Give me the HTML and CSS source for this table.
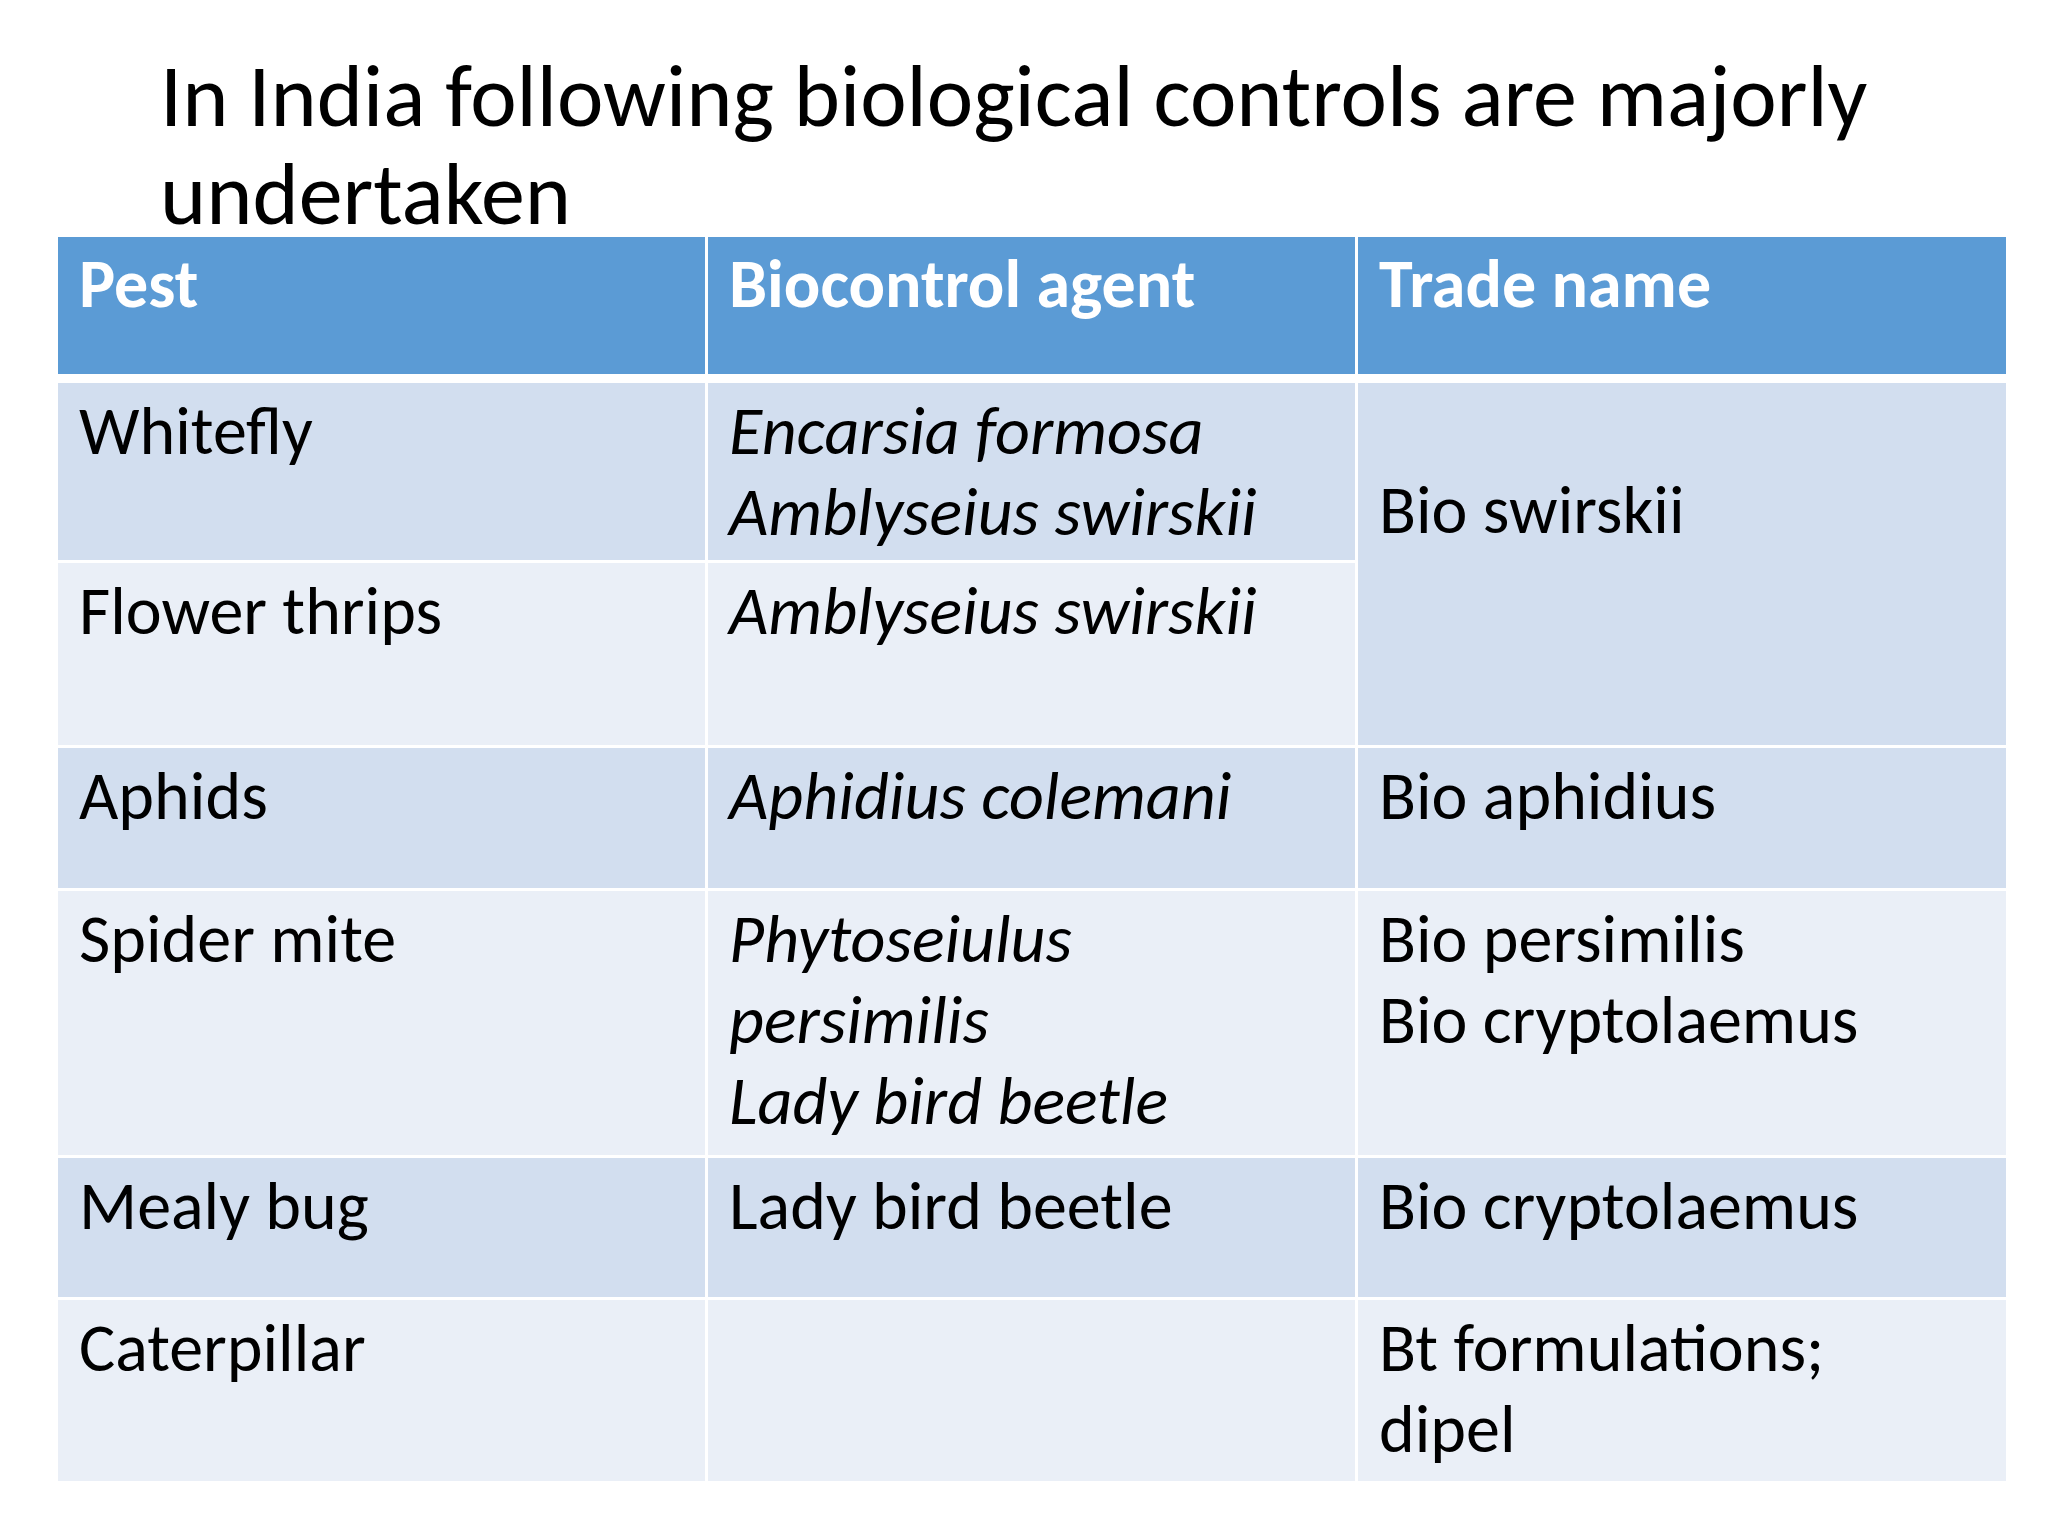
FILE: index.html
```html
<!DOCTYPE html>
<html lang="en">
<head>
<meta charset="utf-8">
<title>Biological controls in India</title>
<link rel="stylesheet" href="styles.css">
</head>
<body>
<main class="slide">
  <h1 class="title"><span class="title-line">In India following biological controls are majorly</span><span class="title-line">undertaken</span></h1>
  <div class="bio-table">
    <div class="cell head">Pest</div>
    <div class="cell head">Biocontrol agent</div>
    <div class="cell head">Trade name</div>

    <div class="cell band1">Whitefly</div>
    <div class="cell band1 sci">Encarsia formosa<br>Amblyseius swirskii</div>
    <div class="cell band1 merged">Bio swirskii</div>

    <div class="cell band2">Flower thrips</div>
    <div class="cell band2 sci">Amblyseius swirskii</div>

    <div class="cell band1">Aphids</div>
    <div class="cell band1 sci">Aphidius colemani</div>
    <div class="cell band1">Bio aphidius</div>

    <div class="cell band2">Spider mite</div>
    <div class="cell band2 sci">Phytoseiulus<br>persimilis<br>Lady bird beetle</div>
    <div class="cell band2">Bio persimilis<br>Bio cryptolaemus</div>

    <div class="cell band1">Mealy bug</div>
    <div class="cell band1">Lady bird beetle</div>
    <div class="cell band1">Bio cryptolaemus</div>

    <div class="cell band2">Caterpillar</div>
    <div class="cell band2"></div>
    <div class="cell band2">Bt formulations;<br>dipel</div>
  </div>
</main>
</body>
</html>
```
FILE: styles.css
```css
html, body {
  margin: 0;
  padding: 0;
  background: #ffffff;
}

.slide {
  width: 2048px;
  height: 1536px;
  overflow: hidden;
  font-family: Carlito, Lato, "Liberation Sans", sans-serif;
  color: #000000;
}

.title {
  box-sizing: border-box;
  height: 237px;
  margin: 0;
  padding: 47px 0 0 160px;
  font-size: 88px;
  font-weight: normal;
  line-height: 98px;
  white-space: nowrap;
}

.title-line {
  display: block;
  height: 98px;
}

.bio-table {
  display: grid;
  width: 1948px;
  margin-left: 58px;
  grid-template-columns: 647px 647px 648px;
  grid-template-rows: 142.5px 177.5px 182px 140px 264px 139px 181px;
  gap: 3px;
  background: #ffffff;
}

.cell {
  box-sizing: border-box;
  padding: 7px 21px 0 21px;
  font-size: 68px;
  line-height: 81px;
  white-space: nowrap;
}

.head {
  height: 136.5px;
  padding-top: 6px;
  background: #5b9bd5;
  color: #ffffff;
  font-weight: bold;
}

.band1 {
  background: #d2deef;
}

.band2 {
  background: #eaeff7;
}

.sci {
  font-style: italic;
}

.merged {
  grid-row: span 2;
  padding-top: 86px;
}
```
